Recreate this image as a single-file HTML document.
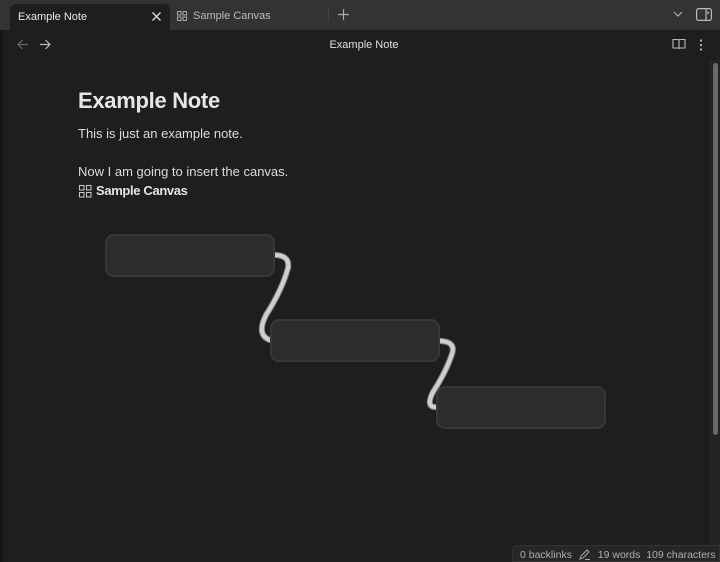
<!DOCTYPE html>
<html><head><style>
*{margin:0;padding:0;box-sizing:border-box}
body{width:720px;height:562px;background:#1e1e1e;font-family:"Liberation Sans",sans-serif;color:#dadada;position:relative;overflow:hidden}
.tabbar{position:absolute;left:0;top:0;width:720px;height:30px;background:#333333}
.tab{position:absolute;left:10px;top:4px;width:160px;height:26px;background:#1e1e1e;border-radius:6px 6px 0 0;font-size:11px;color:#e8e8e8;padding:7px 0 0 8px}
.t2{position:absolute;left:177px;top:10px;font-size:11px;color:#bbb}
.abs{position:absolute}
h1{position:absolute;left:78px;top:88px;font-size:22px;font-weight:bold;color:#e6e6e6;letter-spacing:-0.3px}
p{position:absolute;left:78px;font-size:13px;color:#dcdcdc}
.node{position:absolute;width:170px;height:43px;background:#2c2c2c;border:2px solid #383838;border-radius:9px}
.status{position:absolute;left:512px;top:545px;width:208px;height:17px;background:#262626;border:1px solid #333;border-radius:6px 0 0 0;font-size:10.5px;color:#b0b0b0;padding:3px 0 0 7px;white-space:nowrap}
</style></head><body>
<div class="tabbar"></div>
<div class="tab">Example Note
<svg class="abs" style="left:141px;top:7px" width="11" height="11"><path d="M1.5 1.5L9.5 9.5M9.5 1.5L1.5 9.5" stroke="#ddd" stroke-width="1.3"/></svg></div>
<svg class="abs" style="left:177px;top:11px" width="10" height="10" fill="none" stroke="#aaa" stroke-width="1"><rect x=".5" y=".5" width="3.5" height="3.5"/><rect x="6" y=".5" width="3.5" height="3.5"/><rect x=".5" y="6" width="3.5" height="3.5"/><rect x="6" y="6" width="3.5" height="3.5"/></svg>
<div class="t2" style="left:193px">Sample Canvas</div>
<div class="abs" style="left:328px;top:8px;width:1px;height:14px;background:#444"></div>
<svg class="abs" style="left:338px;top:9px" width="11" height="11"><path d="M5.5 0V11M0 5.5H11" stroke="#aaa" stroke-width="1.2"/></svg>
<svg class="abs" style="left:673px;top:11px" width="10" height="7" fill="none"><path d="M1 1L5 5L9 1" stroke="#aaa" stroke-width="1.2"/></svg>
<svg class="abs" style="left:696px;top:8px" width="16" height="13" fill="none" stroke="#bbb" stroke-width="1.2"><rect x=".6" y=".6" width="14.8" height="11.8" rx="2"/><path d="M10 .6V12.4"/><path d="M12 3.5V6" stroke-width="1.5"/></svg>
<div class="abs" style="left:0;top:30px;width:3px;height:532px;background:#161616"></div>
<svg class="abs" style="left:17px;top:39px" width="12" height="11" fill="none" stroke="#666" stroke-width="1.2"><path d="M11 5.5H1M5.5 1L1 5.5L5.5 10"/></svg>
<svg class="abs" style="left:39px;top:39px" width="12" height="11" fill="none" stroke="#bbb" stroke-width="1.2"><path d="M1 5.5H11M6.5 1L11 5.5L6.5 10"/></svg>
<div class="abs" style="left:0;width:728px;top:39px;text-align:center;font-size:11px;color:#e0e0e0">Example Note</div>
<svg class="abs" style="left:672px;top:38px" width="14" height="12" fill="none" stroke="#bbb" stroke-width="1.1"><path d="M1 1.5H6Q7 1.5 7 3V11Q7 10 6 10H1Z M13 1.5H8Q7 1.5 7 3V11Q7 10 8 10H13Z"/></svg>
<svg class="abs" style="left:699px;top:39px" width="4" height="12" fill="#bbb"><circle cx="2" cy="1.5" r="1.1"/><circle cx="2" cy="6" r="1.1"/><circle cx="2" cy="10.5" r="1.1"/></svg>
<div class="abs" style="left:710px;top:60px;width:10px;height:485px;background:#232323;border-left:1px solid #2a2a2a"></div>
<div class="abs" style="left:713px;top:63px;width:5px;height:372px;background:#6a6a6a;border-radius:3px"></div>
<h1>Example Note</h1>
<p style="top:126px">This is just an example note.</p>
<p style="top:164px">Now I am going to insert the canvas.</p>
<svg class="abs" style="left:79px;top:185px" width="13" height="13" fill="none" stroke="#ccc" stroke-width="1"><rect x=".5" y=".5" width="4.5" height="4.5"/><rect x="7.5" y=".5" width="4.5" height="4.5"/><rect x=".5" y="7.5" width="4.5" height="4.5"/><rect x="7.5" y="7.5" width="4.5" height="4.5"/></svg>
<p style="left:96px;top:183px;font-weight:bold;color:#e4e4e4;letter-spacing:-0.35px">Sample Canvas</p>
<svg class="abs" style="left:0;top:0" width="720" height="562" fill="none">
<g stroke="#8a8a8a" stroke-width="6" stroke-linecap="round"><path d="M276 255Q290 256 288 268Q282 290 266 315Q256 335 270 340"/><path d="M441 341Q456 342 452 354Q446 372 433 392Q425 408 437 407"/></g>
<g stroke="#cfcfcf" stroke-width="4" stroke-linecap="round"><path d="M276 255Q290 256 288 268Q282 290 266 315Q256 335 270 340"/><path d="M441 341Q456 342 452 354Q446 372 433 392Q425 408 437 407"/></g>
</svg>
<div class="node" style="left:105px;top:234px"></div>
<div class="node" style="left:270px;top:319px"></div>
<div class="node" style="left:436px;top:386px"></div>
<div class="status">0 backlinks <svg style="vertical-align:-2px;margin:0 4px" width="12" height="11" fill="none" stroke="#aaa" stroke-width="1"><path d="M1 10L2 7L8 1L10 3L4 9Z M6 10.5H11"/></svg> 19 words&nbsp; 109 characters</div>
</body></html>
